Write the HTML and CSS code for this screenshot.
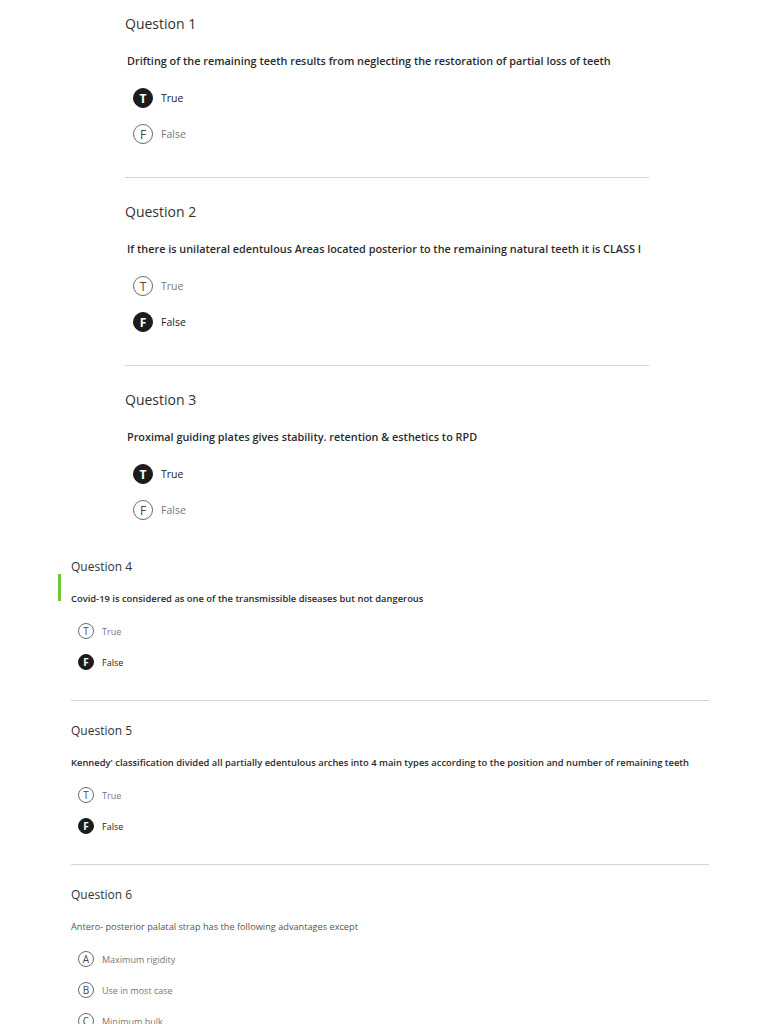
FILE: index.html
```html
<!DOCTYPE html>
<html lang="en">
<head>
<meta charset="utf-8">
<title>Quiz</title>
<link rel="stylesheet" href="styles.css">
</head>
<body>
<main class="page">
  <section class="quiz quiz-lg">
    <article class="question">
      <h2 class="q-title">Question 1</h2>
      <p class="q-text">Drifting of the remaining teeth results from neglecting the restoration of partial loss of teeth</p>
      <ul class="options">
        <li class="option selected"><span class="bubble">T</span><span class="label">True</span></li>
        <li class="option"><span class="bubble">F</span><span class="label">False</span></li>
      </ul>
    </article>
    <hr class="divider">
    <article class="question">
      <h2 class="q-title">Question 2</h2>
      <p class="q-text">If there is unilateral edentulous Areas located posterior to the remaining natural teeth it is CLASS I</p>
      <ul class="options">
        <li class="option"><span class="bubble">T</span><span class="label">True</span></li>
        <li class="option selected"><span class="bubble">F</span><span class="label">False</span></li>
      </ul>
    </article>
    <hr class="divider">
    <article class="question">
      <h2 class="q-title">Question 3</h2>
      <p class="q-text">Proximal guiding plates gives stability. retention &amp; esthetics to RPD</p>
      <ul class="options">
        <li class="option selected"><span class="bubble">T</span><span class="label">True</span></li>
        <li class="option"><span class="bubble">F</span><span class="label">False</span></li>
      </ul>
    </article>
  </section>

  <section class="quiz quiz-sm">
    <article class="question flagged">
      <h2 class="q-title">Question 4</h2>
      <p class="q-text">Covid-19 is considered as one of the transmissible diseases but not dangerous</p>
      <ul class="options">
        <li class="option"><span class="bubble">T</span><span class="label">True</span></li>
        <li class="option selected"><span class="bubble">F</span><span class="label">False</span></li>
      </ul>
    </article>
    <hr class="divider">
    <article class="question">
      <h2 class="q-title">Question 5</h2>
      <p class="q-text">Kennedy' classification divided all partially edentulous arches into 4 main types according to the position and number of remaining teeth</p>
      <ul class="options">
        <li class="option"><span class="bubble">T</span><span class="label">True</span></li>
        <li class="option selected"><span class="bubble">F</span><span class="label">False</span></li>
      </ul>
    </article>
    <hr class="divider">
    <article class="question">
      <h2 class="q-title">Question 6</h2>
      <p class="q-text plain">Antero- posterior palatal strap has the following advantages except</p>
      <ul class="options">
        <li class="option"><span class="bubble">A</span><span class="label">Maximum rigidity</span></li>
        <li class="option"><span class="bubble">B</span><span class="label">Use in most case</span></li>
        <li class="option"><span class="bubble">C</span><span class="label">Minimum bulk</span></li>
      </ul>
    </article>
  </section>
</main>
</body>
</html>
```

FILE: styles.css
```css
* { box-sizing: border-box; }

html, body {
  margin: 0;
  padding: 0;
  background: #ffffff;
}

body {
  font-family: "Open Sans", "Noto Sans", "Liberation Sans", sans-serif;
  color: #333333;
  overflow: hidden;
  height: 1024px;
}

.page {
  display: flex;
  flex-direction: column;
  padding-top: 14px;
}

.quiz {
  display: flex;
  flex-direction: column;
}

.question {
  position: relative;
  display: flex;
  flex-direction: column;
}

.q-title {
  margin: 0;
  font-weight: 400;
  color: #333333;
}

.q-text {
  margin: 0;
  font-weight: 600;
  color: #2b2b2b;
  white-space: nowrap;
}

.q-text.plain {
  font-weight: 400;
  color: #555555;
}

.options {
  list-style: none;
  margin: 0;
  padding: 0;
  display: flex;
  flex-direction: column;
}

.option {
  display: flex;
  align-items: center;
}

.bubble {
  display: flex;
  align-items: center;
  justify-content: center;
  border-radius: 50%;
  border: 1.5px solid #6a6a6a;
  color: #4a4a4a;
  flex: none;
}

.label {
  color: #777777;
}

.option.selected .bubble {
  background: #1c1c1c;
  border-color: #1c1c1c;
  color: #ffffff;
  font-weight: 700;
}

.option.selected .label {
  color: #222222;
}

.divider {
  margin: 0;
  border: 0;
  height: 1px;
  background: #d4d4d4;
}

/* Large section (questions 1-3) */
.quiz-lg {
  margin-left: 125px;
  width: 524px;
}

.quiz-lg .q-title {
  font-size: 14px;
  line-height: 20px;
}

.quiz-lg .q-text {
  font-size: 10.85px;
  line-height: 16px;
  margin-top: 19px;
  padding-left: 2px;
}

.quiz-lg .options {
  margin-top: 19px;
  gap: 16px;
}

.quiz-lg .option {
  gap: 8px;
  padding-left: 8px;
}

.quiz-lg .bubble {
  width: 20px;
  height: 20px;
  font-size: 12px;
}

.quiz-lg .label {
  font-size: 10.5px;
}

.quiz-lg .divider {
  margin-top: 33px;
  margin-bottom: 24px;
}

/* Small section (questions 4-6) */
.quiz-sm {
  margin-left: 71px;
  width: 638px;
  margin-top: 39px;
}

.quiz-sm .q-title {
  font-size: 12px;
  line-height: 16px;
}

.quiz-sm .q-text {
  font-size: 9.4px;
  line-height: 14px;
  margin-top: 17px;
}

.quiz-sm .q-text.plain {
  font-size: 9.2px;
}

.quiz-sm .options {
  margin-top: 17px;
  gap: 15px;
}

.quiz-sm .option {
  gap: 8px;
  padding-left: 7px;
}

.quiz-sm .bubble {
  width: 16px;
  height: 16px;
  font-size: 10px;
}

.quiz-sm .label {
  font-size: 9px;
}

.quiz-sm .divider {
  margin-top: 30px;
  margin-bottom: 22px;
}

.question.flagged::before {
  content: "";
  position: absolute;
  left: -13px;
  top: 15px;
  width: 3px;
  height: 27px;
  background: #6cc833;
}
```
